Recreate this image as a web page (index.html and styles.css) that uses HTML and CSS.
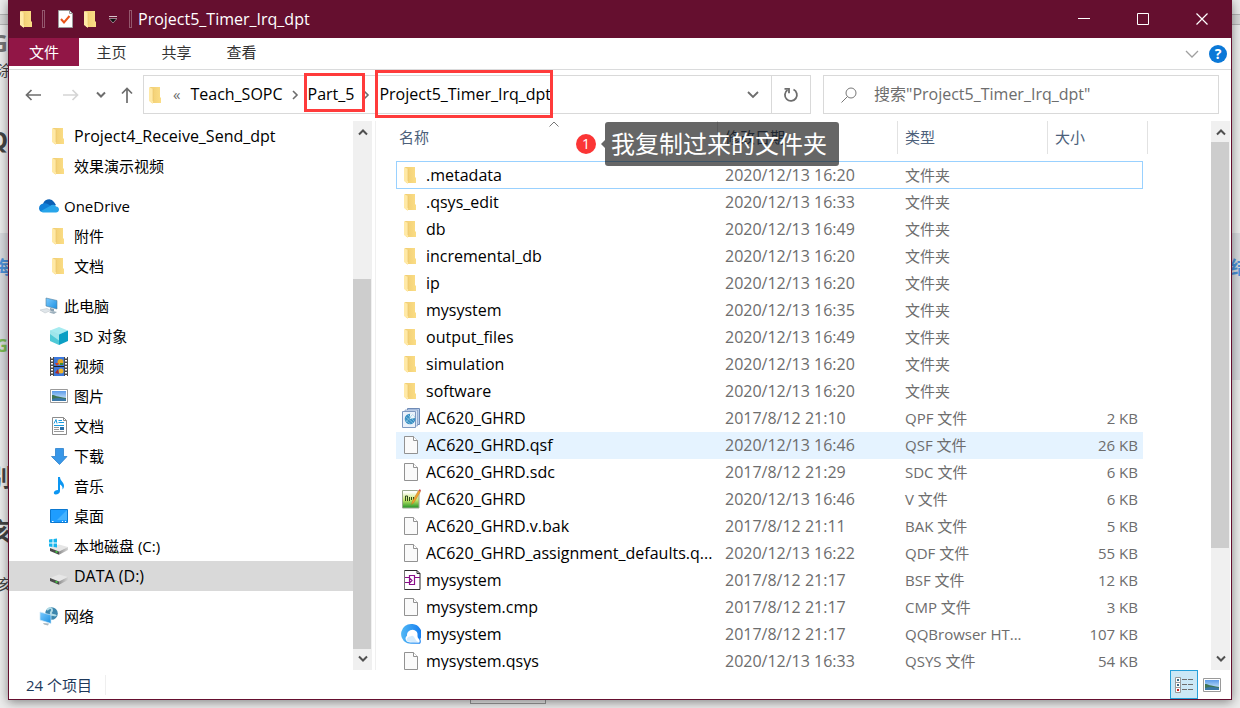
FILE: index.html
```html
<!DOCTYPE html>
<html lang="zh-CN">
<head>
  <meta charset="UTF-8">
  <meta name="viewport" content="width=device-width, initial-scale=1.0">
  <title>Project5_Timer_Irq_dpt</title>
  <link rel="stylesheet" href="styles.css">
</head>
<body>

  <!-- Icon set -->
  <svg class="sprite" aria-hidden="true">
    <defs>
      <linearGradient id="g-folder" x1="0" x2="1"><stop offset="0" stop-color="#f0cd73"/><stop offset="1" stop-color="#fbdd85"/></linearGradient>
      <linearGradient id="g-screen" x1="0" y1="0" x2="1" y2="1"><stop offset="0" stop-color="#7ccbff"/><stop offset="1" stop-color="#1b8fe0"/></linearGradient>
      <linearGradient id="g-sky" x1="0" y1="0" x2="0" y2="1"><stop offset="0" stop-color="#5b9bea"/><stop offset="1" stop-color="#e2f4fb"/></linearGradient>
      <linearGradient id="g-green" x1="0" y1="0" x2="0" y2="1"><stop offset=".1" stop-color="#fdfefb"/><stop offset=".55" stop-color="#c4e66a"/><stop offset=".95" stop-color="#2f9c2c"/></linearGradient>
      <linearGradient id="g-drive" x1="0" x2="1"><stop offset="0" stop-color="#8f8f8f"/><stop offset="1" stop-color="#d6d6d6"/></linearGradient>
      <linearGradient id="g-qq" x1="0" x2="1"><stop offset="0" stop-color="#52b9f5"/><stop offset="1" stop-color="#147cf0"/></linearGradient>
    </defs>
    <symbol id="folder" viewBox="0 0 20 20">
      <path d="M4 2h10v10l1 1v5H5z" fill="url(#g-folder)"/>
      <path d="M3 2l4 2v15l-4-3z" fill="#ffe9a6"/>
      <path d="M7 4v12" stroke="#e9c565" stroke-width=".6"/>
    </symbol>
    <symbol id="file" viewBox="0 0 20 20">
      <path d="M3.500 1.500h9l4 4v13h-13z" fill="#fafafa" stroke="#929292"/>
      <path d="M12.500 1.500v4h4" fill="#fff" stroke="#929292"/>
    </symbol>
    <symbol id="cloud" viewBox="0 0 20 20">
      <path d="M4 9a6 6 0 0 1 11-3l2 3-8 4z" fill="#0a5fb4"/>
      <path d="M4.500 7.500C7 6.500 9 8 12 10l-6 6H4A4 4 0 0 1 0 12.500C0 9.500 2 8 4.500 7.500z" fill="#1180d8"/>
      <path d="M2 15l9-5c2-2 5-1.500 6 .5 2 0 3 1.500 3 3 0 2-1.500 3-3 3H5c-1.500 0-2.500-.5-3-1.500z" fill="#28a5ea"/>
    </symbol>
    <symbol id="pc" viewBox="0 0 20 20">
      <path d="M7 2l11 2.500V13L7 10z" fill="url(#g-screen)" stroke="#567f9c" stroke-width=".6"/>
      <path d="M11 12l4 1v2l-4 .5z" fill="#8aa0b0"/>
      <path d="M1 14l7-1.500 4 2L6 17z" fill="#e0e6ea" stroke="#b8c0c6" stroke-width=".5"/>
      <path d="M10 16.500l4-1.500 4 1-3 2z" fill="#9db0bd"/>
    </symbol>
    <symbol id="cube" viewBox="0 0 20 20">
      <path d="M1 4.500L10 1l9 3.500-9 4z" fill="#a6ebf0"/>
      <path d="M1 4.500l9 4V19l-9-4z" fill="#4fc9d6"/>
      <path d="M1 4.500l9 4v6L1 8z" fill="#c2f2f3" opacity=".7"/>
      <path d="M19 4.500l-9 4V19l9-4z" fill="#0b9fc4"/>
    </symbol>
    <symbol id="film" viewBox="0 0 20 20">
      <path d="M1 1h18v19H1z" fill="#4a4a4a"/>
      <path d="M5 1h10v19H5z" fill="#3c78dc"/>
      <path d="M3 1v19M17 1v19" stroke="#fff" stroke-width="2" stroke-dasharray="1.500 1.500"/>
      <path d="M5 10.500h10" stroke="#222"/>
      <circle cx="11.500" cy="6" r="3" fill="#e0a526"/><path d="M6 7h4l-2 3z" fill="#d34128"/><path d="M11 7h3v2h-3z" fill="#408c2f"/>
      <circle cx="12" cy="15" r="2.500" fill="#f0b429"/><path d="M6 17l3-4 1 5z" fill="#a92c2c"/>
    </symbol>
    <symbol id="picture" viewBox="0 0 20 20">
      <path d="M1.500 3.500h17v13h-17z" fill="#fff" stroke="#9a9a9a"/>
      <path d="M3 5h14v10H3z" fill="url(#g-sky)"/>
      <path d="M3 9c3 0 5 2 14 3v3H3z" fill="#3f7555"/>
      <path d="M3 13c5-1.500 9-1 14 0v2H3z" fill="#3b78a8"/>
    </symbol>
    <symbol id="doc" viewBox="0 0 20 20">
      <path d="M3.500 1.500h11l3 3v14h-14z" fill="#fff" stroke="#8c8c8c"/>
      <path d="M14.500 1.500v3h3" fill="none" stroke="#8c8c8c"/>
      <path d="M5 7.500l2-4 1 4M9.500 4.500H13M9.500 6.500H15M5 9.500h10" fill="none" stroke="#1b9ce0"/>
      <path d="M5 11.500h5M5 13.500h5M5 15.500h10" stroke="#9a9a9a"/>
      <path d="M11 11h4v3h-4z" fill="#2a6fa8"/>
    </symbol>
    <symbol id="download" viewBox="0 0 20 20">
      <path d="M6.500 2.500h8v8h3.500l-7.500 8-8-8h4z" fill="#3897e8" stroke="#2b80cd" stroke-width=".8"/>
    </symbol>
    <symbol id="music" viewBox="0 0 20 20">
      <path d="M9 1h2c0 4 4 5 4 9 0 2-1 3-1.500 3.500C14 10 12 9 11 8.500V15c0 2-2 3.500-4.500 3.500S4 14 9 14z" fill="#0c96f2"/>
    </symbol>
    <symbol id="desktop" viewBox="0 0 20 20">
      <path d="M1.500 3.500h17v13h-17z" fill="#1e9dff" stroke="#0b78d0"/>
      <path d="M8 14l10-10v10z" fill="#44b2ff"/>
      <path d="M3 15.500h1.500M13 15.500h1M16 15.500h1" stroke="#fff"/>
    </symbol>
    <symbol id="drive" viewBox="0 0 20 20">
      <path d="M1 12l9-3.500 9 2.500-9 4.500z" fill="#e6e6e6"/>
      <path d="M1 12l9 3.500v3.200L1 15z" fill="#4b4b4b"/>
      <path d="M10 15.500l9-4.500v3l-9 4.700z" fill="url(#g-drive)"/>
      <path d="M6.500 15.500l2 .8" stroke="#43d23f" stroke-width="1.500"/>
    </symbol>
    <symbol id="windrive" viewBox="0 0 20 20">
      <use href="#drive"/>
      <path d="M0 3.500l3.500-.5v3.500H0zM4.500 3L8 2.500v4H4.500zM0 7.500h3.500V11L0 10.500zM4.500 7.500H8v4L4.500 11z" fill="#16b4ec"/>
    </symbol>
    <symbol id="network" viewBox="0 0 20 20">
      <circle cx="12.500" cy="7.500" r="6.300" fill="#3c86ad"/>
      <path d="M8 4c3-3 5-2 5 0s-2 2-1 4 4 0 5 2" fill="none" stroke="#b3dbe6" stroke-width="2"/>
      <path d="M1 6l11 3v8.500L1 14z" fill="url(#g-screen)" stroke="#cfe8f7" stroke-width=".7"/>
      <path d="M4 17l6 .5-1 2-4-1z" fill="#aab7bf"/>
    </symbol>
    <symbol id="qpf" viewBox="0 0 20 20">
      <path d="M6.500.500h12v16h-12z" fill="#b8cdea" stroke="#6f8bb6"/>
      <path d="M4 2h12.500v16H4z" fill="#dbe7f6" stroke="#7f99c0" stroke-width=".7"/>
      <path d="M1.500 3.500h13v16h-13z" fill="#eaf1fa" stroke="#7f99c0"/>
      <circle cx="9" cy="11" r="5.300" fill="#3b90c4"/>
      <path d="M9 11V5.700A5.300 5.300 0 0 1 14 10z" fill="#eef7fb"/>
      <path d="M5 9l7 6M4.500 12l5 4M7 7l6 6M5 14l6-7" stroke="#90c8e3" stroke-width=".7"/>
    </symbol>
    <symbol id="verilog" viewBox="0 0 20 20">
      <path d="M1.500 1.500h15l1.500 2v15.500h-16.500z" fill="url(#g-green)" stroke="#9aa88e"/>
      <path d="M4.500 12V7h2v5M8.500 12V8M10.500 11V8M12.500 11V8" fill="none" stroke="#2e4a1d"/>
      <path d="M10.500 15.500l1-3.500 6-10.500 2 1-6.500 11z" fill="#f0a530" stroke="#b06a1c" stroke-width=".4"/>
      <path d="M17.500 1.500l1-1.300 1.500.8-.7 1.500z" fill="#cf3e48"/>
    </symbol>
    <symbol id="bsf" viewBox="0 0 20 20">
      <path d="M4 .5h12l3 3v16H4" fill="#fff" stroke="#2c2c2c"/>
      <path d="M16 .5v3h3" fill="none" stroke="#2c2c2c"/>
      <path d="M3.500 0v20" stroke="#777"/>
      <path d="M8.500 5.500h5v9h-5zM4 7.500h4.500M4 12.500h4.500M13.500 7.500H19M9 8.500l2 2-2 2" fill="none" stroke="#8a0f8a" stroke-width="1.200"/>
    </symbol>
    <symbol id="qq" viewBox="0 0 20 20">
      <path d="M10 0a10 10 0 0 0-5 18.600c2 1.200 4 1.200 7 1.200H19c1-1 1-3 .3-4.800A10 10 0 0 0 10 0z" fill="url(#g-qq)"/>
      <path d="M6 17.500c-2-1.500-2-4.500 0-5.700A5.500 5.500 0 0 1 15.500 7.500c2 2.500 0 5 2 7 1 1 1.500 2 1 4h-8c-2 0-3-.2-4.500-1z" fill="#fff"/>
      <path d="M6 17.500c-1-3 1-5 3-5 3-2 4 0 5 2 1 2 2 3 4.500 4z" fill="#d4ebfd"/>
    </symbol>
    <symbol id="check" viewBox="0 0 20 20">
      <path d="M3.500 1.500h11l3 3v14h-14z" fill="#fff" stroke="#9c9c9c"/>
      <path d="M14.500 1.500v3h3" fill="none" stroke="#9c9c9c"/>
      <path d="M6 10l3 3.500L14.500 7" fill="none" stroke="#e9541a" stroke-width="2"/>
    </symbol>
    <symbol id="chev-up" viewBox="0 0 12 12"><path d="M2 8.500l4-4 4 4" fill="none" stroke="currentColor" stroke-width="2"/></symbol>
    <symbol id="chev-down" viewBox="0 0 12 12"><path d="M2 3.500l4 4 4-4" fill="none" stroke="currentColor" stroke-width="2"/></symbol>
    <symbol id="chev-right" viewBox="0 0 12 12"><path d="M4 2l4 4-4 4" fill="none" stroke="currentColor" stroke-width="1.600"/></symbol>
  </svg>

  <!-- Page behind the window -->
  <div class="backdrop" aria-hidden="true">
    <span class="strip strip-top"></span>
    <span class="strip strip-side"></span>
    <span class="peek p1">G</span>
    <span class="peek p2">涂</span>
    <span class="peek p3">Q</span>
    <span class="peek p4">海</span>
    <span class="peek p5">G</span>
    <span class="peek p6">别</span>
    <span class="peek p7">亥</span>
    <span class="peek p8">亥</span>
    <span class="peek p9">结</span>
    <span class="box-edge"></span>
  </div>

  <div class="window">
    <header class="titlebar">
      <svg class="icon"><use href="#folder"/></svg>
      <span class="divider"></span>
      <button class="quick" aria-label="属性"><svg class="icon"><use href="#check"/></svg></button>
      <button class="quick" aria-label="新建文件夹"><svg class="icon"><use href="#folder"/></svg></button>
      <button class="quick more" aria-label="自定义快速访问工具栏"><svg width="8" height="8" viewBox="0 0 8 8"><path d="M0 .5h8" stroke="#d9c4cc"/><path d="M0 2.500h8L4 7z" fill="#111" stroke="#d9c4cc" stroke-width=".6"/></svg></button>
      <span class="divider"></span>
      <h1 class="title">Project5_Timer_Irq_dpt</h1>
      <div class="controls">
        <button aria-label="最小化"><svg width="12" height="12"><path d="M0 5.500h12" stroke="#fff"/></svg></button>
        <button aria-label="最大化"><svg width="12" height="12"><path d="M.5.5h11v11H.5z" fill="none" stroke="#fff"/></svg></button>
        <button aria-label="关闭"><svg width="12" height="12"><path d="M.5.5l11 11M11.500.5l-11 11" stroke="#fff" stroke-width="1.200"/></svg></button>
      </div>
    </header>

    <nav class="tabs">
      <button class="tab active">文件</button>
      <button class="tab">主页</button>
      <button class="tab">共享</button>
      <button class="tab">查看</button>
      <button class="expand" aria-label="展开功能区"><svg width="14" height="8"><path d="M1 1l6 6 6-6" fill="none" stroke="#a0a0a0" stroke-width="1.300"/></svg></button>
      <button class="help" aria-label="帮助">?</button>
    </nav>

    <div class="toolbar">
      <button class="go" aria-label="后退"><svg width="16" height="12"><path d="M6.500 1L1.500 6l5 5M1.500 6H16" fill="none" stroke="#6d6d6d" stroke-width="1.700"/></svg></button>
      <button class="go forward" aria-label="前进"><svg width="16" height="12"><path d="M9.500 1l5 5-5 5M14.500 6H0" fill="none" stroke="#d5d5d5" stroke-width="1.700"/></svg></button>
      <button class="go recent" aria-label="最近浏览的位置"><svg class="chev"><use href="#chev-down"/></svg></button>
      <button class="go up" aria-label="上移"><svg width="12" height="16"><path d="M1 6.500l5-5 5 5M6 1.500V16" fill="none" stroke="#6d6d6d" stroke-width="1.700"/></svg></button>

      <div class="address">
        <svg class="icon"><use href="#folder"/></svg>
        <span class="laquo">«</span>
        <button class="crumb">Teach_SOPC</button>
        <svg class="chev"><use href="#chev-right"/></svg>
        <button class="crumb marked part">Part_5</button>
        <svg class="chev"><use href="#chev-right"/></svg>
        <button class="crumb marked project">Project5_Timer_Irq_dpt</button>
        <button class="drop" aria-label="以前的位置"><svg width="12" height="8"><path d="M1 1l5 5 5-5" fill="none" stroke="#6d6d6d" stroke-width="1.800"/></svg></button>
        <button class="refresh" aria-label="刷新"><svg width="16" height="16" viewBox="0 0 16 16"><path d="M10.500 2.500A6 6 0 1 1 4.500 3" fill="none" stroke="#6d6d6d" stroke-width="1.800"/><path d="M1.500 1.800h4.500v4.500" fill="none" stroke="#6d6d6d" stroke-width="1.800"/></svg></button>
      </div>

      <label class="search">
        <svg width="16" height="16" viewBox="0 0 16 16"><circle cx="10" cy="6" r="5" fill="none" stroke="#777"/><path d="M6.500 9.500L.5 15.500" stroke="#777"/></svg>
        <input type="text" aria-label="搜索" placeholder='搜索"Project5_Timer_Irq_dpt"'>
      </label>
    </div>

    <main class="content">
      <aside class="tree">
        <ul>
          <li class="latin"><a href="#"><svg class="icon"><use href="#folder"/></svg>Project4_Receive_Send_dpt</a></li>
          <li><a href="#"><svg class="icon"><use href="#folder"/></svg>效果演示视频</a></li>
          <li class="root"><a href="#"><svg class="icon"><use href="#cloud"/></svg>OneDrive</a></li>
          <li><a href="#"><svg class="icon"><use href="#folder"/></svg>附件</a></li>
          <li><a href="#"><svg class="icon"><use href="#folder"/></svg>文档</a></li>
          <li class="root"><a href="#"><svg class="icon"><use href="#pc"/></svg>此电脑</a></li>
          <li><a href="#"><svg class="icon"><use href="#cube"/></svg>3D 对象</a></li>
          <li><a href="#"><svg class="icon"><use href="#film"/></svg>视频</a></li>
          <li><a href="#"><svg class="icon"><use href="#picture"/></svg>图片</a></li>
          <li><a href="#"><svg class="icon"><use href="#doc"/></svg>文档</a></li>
          <li><a href="#"><svg class="icon"><use href="#download"/></svg>下载</a></li>
          <li><a href="#"><svg class="icon"><use href="#music"/></svg>音乐</a></li>
          <li><a href="#"><svg class="icon"><use href="#desktop"/></svg>桌面</a></li>
          <li><a href="#"><svg class="icon"><use href="#windrive"/></svg>本地磁盘 (C:)</a></li>
          <li class="selected latin"><a href="#"><svg class="icon"><use href="#drive"/></svg>DATA (D:)</a></li>
          <li class="root"><a href="#"><svg class="icon"><use href="#network"/></svg>网络</a></li>
        </ul>
      </aside>
      <div class="scrollbar tree-scroll">
        <svg class="chev"><use href="#chev-up"/></svg>
        <div class="track"><div class="thumb"></div></div>
        <svg class="chev"><use href="#chev-down"/></svg>
      </div>

      <section class="files">
        <table>
          <colgroup><col class="c-name"><col class="c-date"><col class="c-type"><col class="c-size"><col class="c-end"></colgroup>
          <thead>
            <tr>
              <th>名称<svg class="sort" width="10" height="6"><path d="M.5 5.500L5 1l4.500 4.500" fill="none" stroke="#777"/></svg></th>
              <th>修改日期</th>
              <th>类型</th>
              <th colspan="2">大小</th>
            </tr>
          </thead>
          <tbody>
            <tr class="focused"><td><svg class="icon"><use href="#folder"/></svg>.metadata</td><td>2020/12/13 16:20</td><td>文件夹</td><td></td></tr>
            <tr><td><svg class="icon"><use href="#folder"/></svg>.qsys_edit</td><td>2020/12/13 16:33</td><td>文件夹</td><td></td></tr>
            <tr><td><svg class="icon"><use href="#folder"/></svg>db</td><td>2020/12/13 16:49</td><td>文件夹</td><td></td></tr>
            <tr><td><svg class="icon"><use href="#folder"/></svg>incremental_db</td><td>2020/12/13 16:20</td><td>文件夹</td><td></td></tr>
            <tr><td><svg class="icon"><use href="#folder"/></svg>ip</td><td>2020/12/13 16:20</td><td>文件夹</td><td></td></tr>
            <tr><td><svg class="icon"><use href="#folder"/></svg>mysystem</td><td>2020/12/13 16:35</td><td>文件夹</td><td></td></tr>
            <tr><td><svg class="icon"><use href="#folder"/></svg>output_files</td><td>2020/12/13 16:49</td><td>文件夹</td><td></td></tr>
            <tr><td><svg class="icon"><use href="#folder"/></svg>simulation</td><td>2020/12/13 16:20</td><td>文件夹</td><td></td></tr>
            <tr><td><svg class="icon"><use href="#folder"/></svg>software</td><td>2020/12/13 16:20</td><td>文件夹</td><td></td></tr>
            <tr><td><svg class="icon"><use href="#qpf"/></svg>AC620_GHRD</td><td>2017/8/12 21:10</td><td>QPF 文件</td><td>2 KB</td></tr>
            <tr class="hovered"><td><svg class="icon"><use href="#file"/></svg>AC620_GHRD.qsf</td><td>2020/12/13 16:46</td><td>QSF 文件</td><td>26 KB</td></tr>
            <tr><td><svg class="icon"><use href="#file"/></svg>AC620_GHRD.sdc</td><td>2017/8/12 21:29</td><td>SDC 文件</td><td>6 KB</td></tr>
            <tr><td><svg class="icon"><use href="#verilog"/></svg>AC620_GHRD</td><td>2020/12/13 16:46</td><td>V 文件</td><td>6 KB</td></tr>
            <tr><td><svg class="icon"><use href="#file"/></svg>AC620_GHRD.v.bak</td><td>2017/8/12 21:11</td><td>BAK 文件</td><td>5 KB</td></tr>
            <tr><td><svg class="icon"><use href="#file"/></svg>AC620_GHRD_assignment_defaults.q...</td><td>2020/12/13 16:22</td><td>QDF 文件</td><td>55 KB</td></tr>
            <tr><td><svg class="icon"><use href="#bsf"/></svg>mysystem</td><td>2017/8/12 21:17</td><td>BSF 文件</td><td>12 KB</td></tr>
            <tr><td><svg class="icon"><use href="#file"/></svg>mysystem.cmp</td><td>2017/8/12 21:17</td><td>CMP 文件</td><td>3 KB</td></tr>
            <tr><td><svg class="icon"><use href="#qq"/></svg>mysystem</td><td>2017/8/12 21:17</td><td>QQBrowser HT...</td><td>107 KB</td></tr>
            <tr><td><svg class="icon"><use href="#file"/></svg>mysystem.qsys</td><td>2020/12/13 16:33</td><td>QSYS 文件</td><td>54 KB</td></tr>
          </tbody>
        </table>
        <div class="note">
          <span class="badge">1</span>
          <span class="bubble">我复制过来的文件夹</span>
        </div>
      </section>
      <div class="scrollbar file-scroll">
        <svg class="chev"><use href="#chev-up"/></svg>
        <div class="track"><div class="thumb"></div></div>
        <svg class="chev"><use href="#chev-down"/></svg>
      </div>
    </main>

    <footer class="status">
      <span class="count">24 个项目</span>
      <button class="view on" aria-label="详细信息"><svg width="20" height="18" viewBox="0 0 20 18"><path d="M1.500 1.500h5v15h-5zM1.500 6.500h5M1.500 11.500h5" fill="#fff" stroke="#999"/><path d="M3 4h2M3 9h2" stroke="#3a6b85" stroke-width="2"/><path d="M3 14h2" stroke="#c22" stroke-width="2"/><path d="M8 3.500h5M14 3.500h5M8 8.500h5M14 8.500h5M8 13.500h5M14 13.500h5" stroke="#6e6e6e"/></svg></button>
      <button class="view" aria-label="大图标"><svg class="icon"><use href="#picture"/></svg></button>
    </footer>
  </div>

</body>
</html>
```

FILE: styles.css
```css
* {
  box-sizing: border-box;
}

body {
  margin: 0;
  height: 100vh;
  padding: 0 8px 8px;
  overflow: hidden;
  background: #ececec;
  font-family: "Open Sans", "Noto Sans CJK SC", sans-serif;
  font-size: 15px;
  line-height: 20px;
  color: #000;
}

button {
  margin: 0;
  padding: 0;
  border: 0;
  background: none;
  font: inherit;
  color: inherit;
}

ul {
  margin: 0;
  padding: 0;
  list-style: none;
}

a {
  color: inherit;
  text-decoration: none;
}

svg {
  flex: none;
}

.sprite {
  position: absolute;
  width: 0;
  height: 0;
}

.icon {
  width: 20px;
  height: 20px;
}

.chev {
  width: 12px;
  height: 12px;
  color: #6d6d6d;
}

/* Page behind the window */
.backdrop {
  position: absolute;
  inset: 0;
  overflow: hidden;
}

.strip {
  position: absolute;
  left: 0;
  right: 0;
}

.strip-top {
  top: 14px;
  height: 11px;
  background: #d8d8d8;
  border: solid #b5b5b5;
  border-width: 1px 0;
}

.strip-side {
  top: 233px;
  height: 147px;
  background: #d8dade;
}

.peek {
  position: absolute;
  right: calc(100% - 12px);
  font-size: 24px;
  font-weight: bold;
  line-height: 30px;
  color: #444;
}

.p1 { top: 28px; right: calc(100% - 8px); color: #777; }
.p2 { top: 55px; font-size: 15px; font-weight: normal; }
.p3 { top: 125px; right: calc(100% - 8px); }
.p4 { top: 252px; font-size: 18px; color: #4a90d9; }
.p5 { top: 330px; right: calc(100% - 8px); font-size: 18px; color: #7dbb55; }
.p6 { top: 462px; }
.p7 { top: 516px; }
.p8 { top: 569px; font-size: 15px; font-weight: normal; }
.p9 { top: 252px; right: -8px; font-size: 18px; color: #4a90d9; }

.box-edge {
  position: absolute;
  bottom: 4px;
  left: 470px;
  width: 76px;
  height: 12px;
  border: 1px solid #999;
}

/* Window frame */
.window {
  position: relative;
  display: flex;
  flex-direction: column;
  height: 100%;
  background: #fff;
  border: 1px solid #650f2f;
  border-top: 0;
  box-shadow: 0 2px 10px rgba(0, 0, 0, 0.45);
}

.titlebar {
  display: flex;
  align-items: center;
  height: 38px;
  padding-left: 8px;
  background: #650f2f;
  color: #fff;
}

.divider {
  width: 3px;
  height: 18px;
  margin: 0 4px 0 5px;
  border: 1px solid #94576d;
}

.quick {
  display: flex;
  margin-left: 6px;
}

.quick.more {
  margin: 2px 12px 0 8px;
}

.titlebar .more + .divider {
  margin: 0 6px 0 0;
}

.title {
  margin: 0;
  font-size: 16px;
  font-weight: normal;
}

.controls {
  display: flex;
  height: 100%;
  margin-left: auto;
}

.controls button {
  display: grid;
  place-items: center;
  width: 59px;
}

/* Ribbon tabs */
.tabs {
  display: flex;
  align-items: center;
  height: 32px;
  padding-right: 4px;
  border-bottom: 1px solid #dadbdc;
}

.tab {
  align-self: flex-start;
  width: 65px;
  height: 28px;
  padding-bottom: 1px;
  color: #333;
}

.tab.active {
  width: 70px;
  background: #911646;
  color: #fff;
}

.expand {
  display: flex;
  margin-left: auto;
}

.help {
  width: 18px;
  height: 18px;
  margin-left: 10px;
  border-radius: 50%;
  background: #0b78d7;
  color: #fff;
  font-size: 14px;
  font-weight: bold;
  line-height: 18px;
}

/* Address row */
.toolbar {
  display: flex;
  align-items: center;
  height: 51px;
  padding: 0 12px 2px 16px;
}

.go {
  display: flex;
  margin-right: 22px;
}

.go.forward {
  margin-right: 16px;
}

.go.recent {
  margin-right: 14px;
}

.go.up {
  margin-right: 10px;
}

.address,
.search {
  display: flex;
  align-items: center;
  height: 39px;
  border: 1px solid #d9d9d9;
}

.address {
  flex: 664;
  padding-left: 2px;
}

.laquo {
  margin: 0 10px 2px 7px;
  color: #6d6d6d;
}

.address > .chev {
  margin: 0 7px 0 6px;
}

.crumb {
  margin-bottom: 2px;
  font-size: 16px;
}

.crumb.marked {
  position: relative;
}

.marked::after {
  content: "";
  position: absolute;
  border: 3px solid #ff3b3b;
}

.part::after {
  inset: -11px -11px -8px -4px;
}

.project::after {
  inset: -14px -2px -14px -4px;
}

.drop {
  display: flex;
  margin: 0 12px 0 auto;
}

.refresh {
  display: grid;
  place-items: center;
  width: 39px;
  height: 100%;
  border-left: 1px solid #d9d9d9;
}

.search {
  flex: 377;
  margin-left: 12px;
  padding-left: 17px;
}

.search input {
  flex: 1;
  min-width: 0;
  padding: 0 0 2px;
  margin-left: 17px;
  border: 0;
  outline: 0;
  background: none;
  font: inherit;
  font-size: 16px;
}

.search input::placeholder {
  color: #6d6d6d;
}

/* Main area */
.content {
  display: flex;
  flex: 1;
  min-height: 0;
}

.tree {
  width: 344px;
  overflow: hidden;
}

.tree a {
  display: flex;
  align-items: center;
  gap: 5px;
  height: 30px;
  padding-left: 40px;
}

.tree .latin {
  font-size: 16px;
}

.tree .root {
  margin-top: 10px;
}

.tree .root a {
  padding-left: 30px;
}

.tree .selected {
  background: #d9d9d9;
}

.scrollbar {
  display: flex;
  flex-direction: column;
  align-items: center;
  width: 19px;
  padding: 5px 0;
  background: #f0f0f0;
}

.scrollbar .chev {
  color: #505050;
}

.track {
  display: flex;
  flex: 1;
  flex-direction: column;
  width: 100%;
  margin: 4px 0;
}

.thumb {
  margin-right: 1px;
  background: #cdcdcd;
}

.tree-scroll .thumb {
  height: 73%;
  margin-top: auto;
}

.file-scroll .thumb {
  height: 80%;
}

.file-scroll {
  margin-right: 1px;
}

/* File list */
.files {
  position: relative;
  flex: 1;
  margin-left: 3px;
  padding-left: 20px;
  overflow: hidden;
  border-left: 1px solid #f0f0f0;
}

table {
  width: 752px;
  table-layout: fixed;
  border-collapse: separate;
  border-spacing: 0;
}

.c-date { width: 180px; }
.c-type { width: 150px; }
.c-size { width: 96px; }
.c-end { width: 5px; }

th {
  position: relative;
  height: 33px;
  padding: 0 7px 2px;
  border-left: 1px solid #e2e2e2;
  font-weight: normal;
  text-align: left;
  color: #4c607a;
}

th:first-child {
  padding-left: 3px;
  border-left: 0;
}

th:last-child {
  border-right: 1px solid #e2e2e2;
}

.sort {
  position: absolute;
  top: 0;
  left: 50%;
  margin-left: -7px;
}

thead::after {
  content: "";
  display: block;
  height: 7px;
}

td {
  height: 27px;
  padding: 0 5px 2px 8px;
  overflow: hidden;
  color: #6d6d6d;
  white-space: nowrap;
}

td:first-child {
  padding-left: 5px;
  font-size: 16px;
  color: #000;
}

td:nth-child(2) {
  font-size: 16px;
}

td:nth-child(4) {
  text-align: right;
}

td .icon {
  margin-right: 5px;
  vertical-align: -4px;
}

.focused td {
  height: 28px;
  padding-bottom: 0;
  border: solid #99d1ff;
  border-width: 1px 0;
}

.focused td:first-child {
  border-left-width: 1px;
  padding-left: 4px;
}

.focused td:last-child {
  border-right-width: 1px;
}

.hovered td {
  background: #e5f3ff;
}

/* Callout */
.note {
  position: absolute;
  top: 1px;
  left: 200px;
  display: flex;
  align-items: center;
  gap: 9px;
}

.badge {
  width: 20px;
  height: 20px;
  border-radius: 50%;
  background: #fb3535;
  color: #fff;
  font-size: 14px;
  text-align: center;
}

.bubble {
  position: relative;
  padding: 7px 12px 7px 6px;
  border-radius: 3px;
  background: rgba(0, 0, 0, 0.6);
  color: #fff;
  font-size: 24px;
  line-height: 30px;
}

.bubble::before {
  content: "";
  position: absolute;
  top: 18px;
  left: -4px;
  border: solid transparent;
  border-width: 4px 4px 4px 0;
  border-right-color: rgba(0, 0, 0, 0.6);
}

/* Status bar */
.status {
  display: flex;
  align-items: center;
  height: 29px;
  padding: 0 5px 0 17px;
  color: #1e395b;
}

.count {
  margin-right: auto;
  padding-right: 13px;
  border-right: 1px solid #efefef;
}

.view {
  display: grid;
  place-items: center;
  width: 28px;
  height: 29px;
}

.view.on {
  border: 1px solid #26a0da;
  background: #cbe8f6;
}
```
